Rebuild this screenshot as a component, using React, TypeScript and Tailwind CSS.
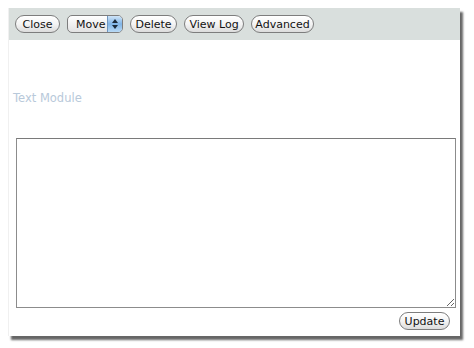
import React from "react";

const font = { fontFamily: '"DejaVu Sans", "Liberation Sans", sans-serif' };

function Pill({ children, className = "" }: { children: React.ReactNode; className?: string }) {
  return (
    <div
      className={
        "h-[18px] flex items-center justify-center rounded-full border border-[#7d7d7d] bg-gradient-to-b from-[#ffffff] via-[#f4f4f4] to-[#dcdcdc] text-[11px] leading-none text-[#111] shadow-[inset_0_1px_0_#fff] " +
        className
      }
      style={font}
    >
      {children}
    </div>
  );
}

export default function App() {
  return (
    <div className="w-[474px] h-[348px] bg-white pt-[8px] pl-[8px]">
      <div className="w-[452px] h-[328px] bg-white flex flex-col shadow-[3px_4px_2px_rgba(0,0,0,0.6)] border-l border-[#f0f0f0]">
        <div className="h-[32px] bg-[#d9dfdd] flex items-center pl-[6px] gap-[7px]">
          <Pill className="w-[45px]">Close</Pill>
          <div
            className="h-[18px] w-[56px] flex items-stretch rounded-[5px] border border-[#7d7d7d] bg-gradient-to-b from-[#ffffff] to-[#e2e2e2] overflow-hidden"
            style={font}
          >
            <div className="flex-1 flex items-center pl-[8px] text-[11px] leading-none text-[#111]">Move</div>
            <div className="w-[15px] flex flex-col items-center justify-center gap-[2px] bg-gradient-to-b from-[#cfe4f7] via-[#7fb4e6] to-[#b9daf5] border-l border-[#6f95bd]">
              <svg width="6" height="4" viewBox="0 0 6 4"><path d="M3 0 L6 4 L0 4 Z" fill="#1b2a3a" /></svg>
              <svg width="6" height="4" viewBox="0 0 6 4"><path d="M0 0 L6 0 L3 4 Z" fill="#1b2a3a" /></svg>
            </div>
          </div>
          <Pill className="w-[47px]">Delete</Pill>
          <Pill className="w-[60px]">View Log</Pill>
          <Pill className="w-[63px]">Advanced</Pill>
        </div>
        <div className="pl-[4px] pt-[51px] h-[98px]">
          <div className="text-[11.5px] leading-[14px] text-[#b8c9da]" style={font}>
            Text Module
          </div>
        </div>
        <div className="pl-[7px]">
          <textarea className="block w-[440px] h-[170px] border border-[#8c8c8c] border-t-[#7a7a7a] bg-white outline-none resize" />
        </div>
        <div className="flex justify-end pr-[10px] pt-[4px]">
          <Pill className="w-[51px]">Update</Pill>
        </div>
      </div>
    </div>
  );
}
